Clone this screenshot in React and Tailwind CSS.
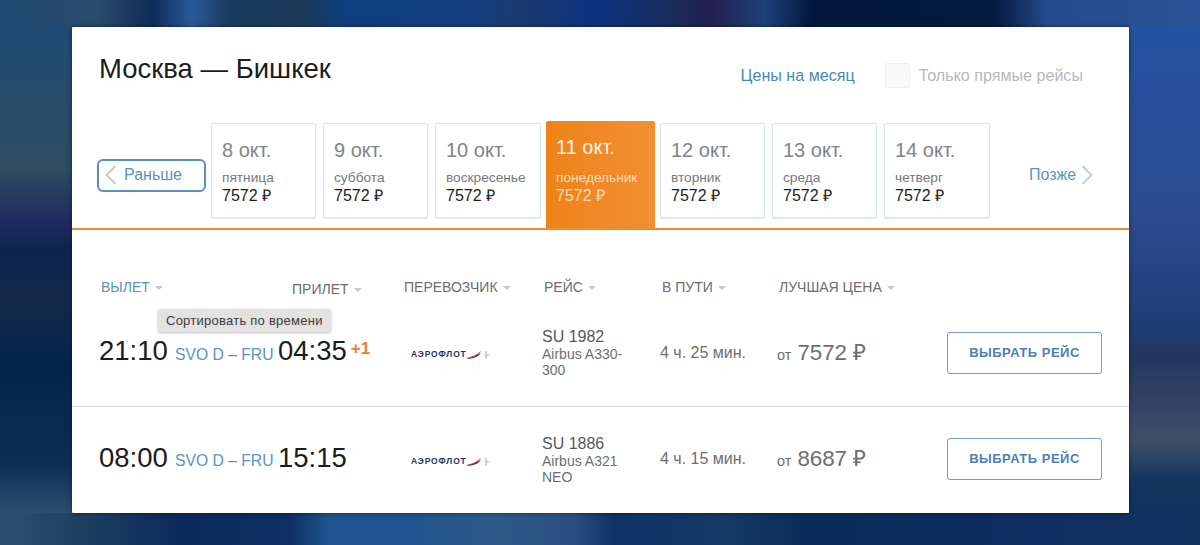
const days = [
  { date: '8 окт.', name: 'пятница', w: 'w-[105px]' },
  { date: '9 окт.', name: 'суббота', w: 'w-[105px]' },
  { date: '10 окт.', name: 'воскресенье', w: 'w-[106px]' },
  { date: '11 окт.', name: 'понедельник', w: 'w-[109px]', active: true },
  { date: '12 окт.', name: 'вторник', w: 'w-[105px]' },
  { date: '13 окт.', name: 'среда', w: 'w-[105px]' },
  { date: '14 окт.', name: 'четверг', w: 'w-[106px]' },
];

const flights = [
  { dep: '21:10', arr: '04:35', plus: true, no: 'SU 1982', plane: 'Airbus A330-300', time: '4 ч. 25 мин.', price: '7572' },
  { dep: '08:00', arr: '15:15', no: 'SU 1886', plane: 'Airbus A321 NEO', time: '4 ч. 15 мин.', price: '8687' },
];

const Caret = () => (
  <span className="inline-block ml-[5px] mb-[2px] border-x-[4.5px] border-t-[4px] border-x-transparent border-t-[#c3c8cc]" />
);

const Arrow = ({ flip }) => (
  <svg width="12" height="20" viewBox="0 0 12 20" fill="none" stroke="#c6cacc" strokeWidth="1.8" className="shrink-0">
    <path d={flip ? 'M1.5 1 L10.5 10 L1.5 19' : 'M10.5 1 L1.5 10 L10.5 19'} />
  </svg>
);

const Logo = () => (
  <div className="flex items-center pt-[4px]">
    <span className="text-[8.5px] leading-none font-bold tracking-[0.85px] text-[#26325f]">АЭРОФЛОТ</span>
    <svg width="25" height="11" viewBox="0 0 25 11" className="-ml-[1px]">
      <path d="M0 9 C6 8 10 6 15 2 C13 6 9 9 3 10 Z" fill="#d8343f" />
      <path d="M4 9 C8 8 11 6 15 4 C13 7 9 9 4 9 Z" fill="#2a3a75" />
      <path d="M19 2 L20.5 2 L21.5 5 L24.5 6 L21.5 6.5 L20.5 10 L19 10 L19.5 6.5 L17.5 6 L19.5 5 Z" fill="#c5ccd6" />
    </svg>
  </div>
);

const App = () => {
  return (
    <div className="h-[545px] w-[1200px] overflow-hidden flex flex-col font-['Liberation_Sans',Arial,sans-serif]">
      <div className="h-[27px] shrink-0 bg-[linear-gradient(90deg,#1e4a75_0px,#2a4a6a_100px,#0e2a5a_153px,#2a5a9a_191px,#1a3a5e_230px,#1c3a5a_306px,#0e3f80_344px,#123f80_460px,#1c3a70_520px,#0c3380_597px,#1a2a5c_673px,#22204f_711px,#1e4078_765px,#04183f_811px,#051a40_995px,#244c8c_1048px,#2a5298_1200px)]" />
      <div className="flex h-[486px] shrink-0">
        <div className="w-[72px] bg-[linear-gradient(180deg,#1e4a75_0%,#2e4c60_29%,#1f2b60_40%,#0e2350_46%,#14294a_56%,#04244f_70%,#0a2f55_90%,#2a5070_100%)]" />
        <div className="relative w-[1057px] bg-white rounded-[3px] shadow-[0_0_4px_rgba(0,0,0,0.5)]">
          <div className="flex items-start pl-[27px] pr-[46px] pt-[24px] h-[95px]">
            <h1 className="text-[27.5px] leading-[36px] text-[#1c1c1c] mr-auto">Москва — Бишкек</h1>
            <a className="text-[16.1px] leading-[48px] text-[#4a87b8] mr-[30px]">Цены на месяц</a>
            <span className="w-[25px] h-[25px] mt-[12px] bg-[#fafafa] border border-[#f0f0f0] rounded-[2px] mr-[9px]" />
            <span className="text-[16.1px] leading-[48px] text-[#b4b8bb]">Только прямые рейсы</span>
          </div>

          <div className="flex items-end h-[108px] border-b-2 border-[#ee8a32]">
            <div className="w-[139px] h-[106px] pl-[25px] flex items-center">
              <button className="w-[109px] h-[33px] border-2 border-[#5b8fc2] rounded-[6px] flex items-center pl-[6px] text-[16px] text-[#5b8fc2]">
                <Arrow />
                <span className="ml-[7px]">Раньше</span>
              </button>
            </div>
            <div className="flex items-end gap-[7px] h-[107px]">
              {days.map((d) =>
                d.active ? (
                  <div key={d.date} className={`${d.w} h-[107px] -mx-[2px] rounded-t-[2px] pl-[10px] pt-[13px] text-[#fff3e6] bg-[linear-gradient(90deg,#ee8318,#f28f35)]`}>
                    <div className="text-[20px] leading-[26px]">{d.date}</div>
                    <div className="text-[13.7px] leading-[16px] mt-[10px] text-[#fcdcbc]">{d.name}</div>
                    <div className="text-[16px] leading-[19px] text-[#fcdcbc]">7572 ₽</div>
                  </div>
                ) : (
                  <div key={d.date} className={`${d.w} h-[95px] mb-[10px] rounded-[2px] border border-[#d6e6ef] shadow-[0_1px_1px_rgba(120,150,170,0.2)] pl-[10px] pt-[13px]`}>
                    <div className="text-[20px] leading-[26px] text-[#808588]">{d.date}</div>
                    <div className="text-[13.7px] leading-[16px] mt-[7px] text-[#77797b]">{d.name}</div>
                    <div className="text-[16px] leading-[19px] text-[#1c1c1c]">7572 ₽</div>
                  </div>
                )
              )}
            </div>
            <div className="flex items-center h-[106px] ml-[39px] text-[16px] text-[#5a93bd]">
              Позже
              <span className="ml-[5px]"><Arrow flip /></span>
            </div>
          </div>

          <div className="relative flex items-start h-[60px] pl-[29px] pt-[48px] text-[14px] leading-[18px] text-[#6a6e71]">
            <div className="w-[191px] text-[#5a93c4]">ВЫЛЕТ<Caret /></div>
            <div className="w-[112px] mt-[2px]">ПРИЛЕТ<Caret /></div>
            <div className="w-[140px]">ПЕРЕВОЗЧИК<Caret /></div>
            <div className="w-[118px]">РЕЙС<Caret /></div>
            <div className="w-[117px]">В ПУТИ<Caret /></div>
            <div>ЛУЧШАЯ ЦЕНА<Caret /></div>
            <div className="absolute left-[86px] top-[79px] h-[23px] px-[8px] flex items-center rounded-[3px] bg-[#e3e2e1] shadow-[0_1px_3px_rgba(0,0,0,0.25)] text-[13px] tracking-[0.25px] text-[#3c3c3c] whitespace-nowrap">
              Сортировать по времени
            </div>
          </div>

          {flights.map((f, i) => (
            <div key={f.no} className={`flex items-center pl-[27px] ${i === 0 ? 'h-[118px] mt-[-1px] pt-[10px] border-b border-[#d3dbe0]' : 'h-[106px] pb-[2px]'}`}>
              <div className="w-[76px] pb-[3px] text-[27.5px] text-[#1c1c1c]">{f.dep}</div>
              <div className="w-[103px] text-[15.7px] pt-[4px] text-[#5a93c4]">SVO D – FRU</div>
              <div className="w-[133px] flex items-start pb-[3px] text-[27.5px] text-[#1c1c1c]">
                {f.arr}
                {f.plus && <span className="text-[17px] font-bold text-[#e8842a] ml-[4px] mt-[6px]">+1</span>}
              </div>
              <div className="w-[131px]"><Logo /></div>
              <div className="w-[118px] text-[14px] leading-[16px] text-[#6b6f72]">
                <div className="text-[16px] pt-[1px] leading-[18px] text-[#55595c]">{f.no}</div>
                <div className="w-[90px]">{f.plane}</div>
              </div>
              <div className="w-[118px] text-[16px] text-[#6b6f72]">{f.time}</div>
              <div className="w-[169px] flex items-baseline -ml-[1px] text-[#6b6f72]">
                <span className="text-[14.5px]">от</span>
                <span className="text-[22.3px] ml-[6px]">{f.price} ₽</span>
              </div>
              <button className="w-[155px] ml-[1px] h-[42px] border-[1.5px] border-[#6f9cc8] rounded-[3px] text-[13px] font-bold tracking-[0.5px] text-[#4d80b4]">
                ВЫБРАТЬ РЕЙС
              </button>
            </div>
          ))}
        </div>
        <div className="w-[71px] bg-[linear-gradient(180deg,#2452a0_0%,#2c4d92_36%,#1f3c75_62%,#23365f_68%,#404f68_85%,#15355f_93%,#13315f_100%)]" />
      </div>
      <div className="flex-1 bg-[linear-gradient(90deg,#2a5070_0px,#1a3c60_100px,#0c2a5c_176px,#0e2f62_290px,#20558f_329px,#20558f_413px,#2d5a88_497px,#2b4f80_574px,#0f3367_612px,#153a66_727px,#0a2c5a_803px,#0f2d60_1033px,#13315f_1200px)]" />
    </div>
  );
};

export default App;
